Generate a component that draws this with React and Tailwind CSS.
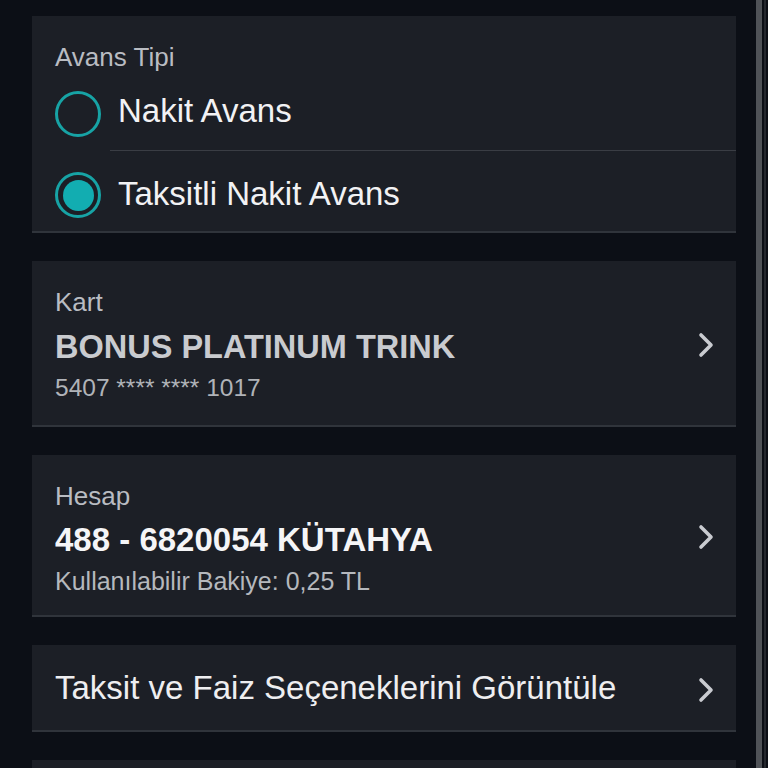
import React from 'react';

const font = { fontFamily: '"Liberation Sans", Arial, sans-serif' };

const Chevron = () => (
  <svg width="16" height="26" viewBox="0 0 16 26" fill="none" className="shrink-0 mt-[4px]">
    <path d="M3 3 L13 13 L3 23" stroke="#c9cbd0" strokeWidth="3.6" strokeLinecap="round" strokeLinejoin="round" />
  </svg>
);

const Radio = ({ checked }) => (
  <div className="w-[46px] h-[46px] rounded-full border-[3px] border-[#17a3a5] flex items-center justify-center shrink-0">
    {checked && <div className="w-[31px] h-[31px] rounded-full bg-[#12adb1]" />}
  </div>
);

const App = () => {
  return (
    <div className="w-[768px] h-[768px] overflow-hidden bg-[#0c0f16] flex" style={font}>
      {/* main column */}
      <div className="w-[756px] pl-[32px] pr-[20px] pt-[16px] flex flex-col gap-[28px]">
        {/* Avans Tipi */}
        <div className="shrink-0 bg-[#1c1f26] border-b-2 border-[#30343b]">
          <div className="pt-[25px] pl-[23px] text-[26px] leading-[32px] text-[#b9bcc2]">Avans Tipi</div>
          <div className="h-[77px] pt-[5px] flex items-center pl-[23px] gap-[17px]">
            <Radio />
            <span className="text-[33px] text-[#f2f2f4] -mt-[6px]">Nakit Avans</span>
          </div>
          <div className="ml-[78px] h-px bg-[#3a3d44]" />
          <div className="h-[80px] pt-[8px] flex items-center pl-[23px] gap-[17px]">
            <Radio checked />
            <span className="text-[33px] text-[#f2f2f4] -mt-[2px]">Taksitli Nakit Avans</span>
          </div>
        </div>

        {/* Kart */}
        <div className="shrink-0 bg-[#1c1f26] border-b-2 border-[#30343b] flex items-center pl-[23px] pr-[22px]">
          <div className="flex-1 pt-[24px] pb-[21px]">
            <div className="text-[26px] leading-[34px] text-[#b9bcc2]">Kart</div>
            <div className="mt-[8px] text-[32.5px] leading-[40px] font-bold text-[#c9cbcf]">BONUS PLATINUM TRINK</div>
            <div className="mt-[5px] text-[24.5px] leading-[32px] text-[#b0b3b8]">5407 **** **** 1017</div>
          </div>
          <Chevron />
        </div>

        {/* Hesap */}
        <div className="shrink-0 bg-[#1c1f26] border-b-2 border-[#30343b] flex items-center pl-[23px] pr-[22px]">
          <div className="flex-1 pt-[24px] pb-[18px]">
            <div className="text-[26px] leading-[34px] text-[#b9bcc2]">Hesap</div>
            <div className="mt-[7px] text-[33px] leading-[40px] font-bold text-[#f5f5f7]">488 - 6820054 KÜTAHYA</div>
            <div className="mt-[5px] text-[25px] leading-[32px] text-[#b5b8bd]">Kullanılabilir Bakiye: 0,25 TL</div>
          </div>
          <Chevron />
        </div>

        {/* Taksit ve Faiz */}
        <div className="shrink-0 h-[87px] bg-[#1c1f26] border-b-2 border-[#30343b] flex items-center pl-[23px] pr-[22px]">
          <span className="flex-1 text-[33px] text-[#eeeef0]">Taksit ve Faiz Seçeneklerini Görüntüle</span>
          <Chevron />
        </div>

        <div className="h-[88px] bg-[#1c1f26] shrink-0" />
      </div>

      {/* right edge strip */}
      <div className="w-[6px] bg-[#505358]" />
      <div className="w-[2px]" />
      <div className="w-[2px] bg-[#25282e]" />
    </div>
  );
};

export default App;
